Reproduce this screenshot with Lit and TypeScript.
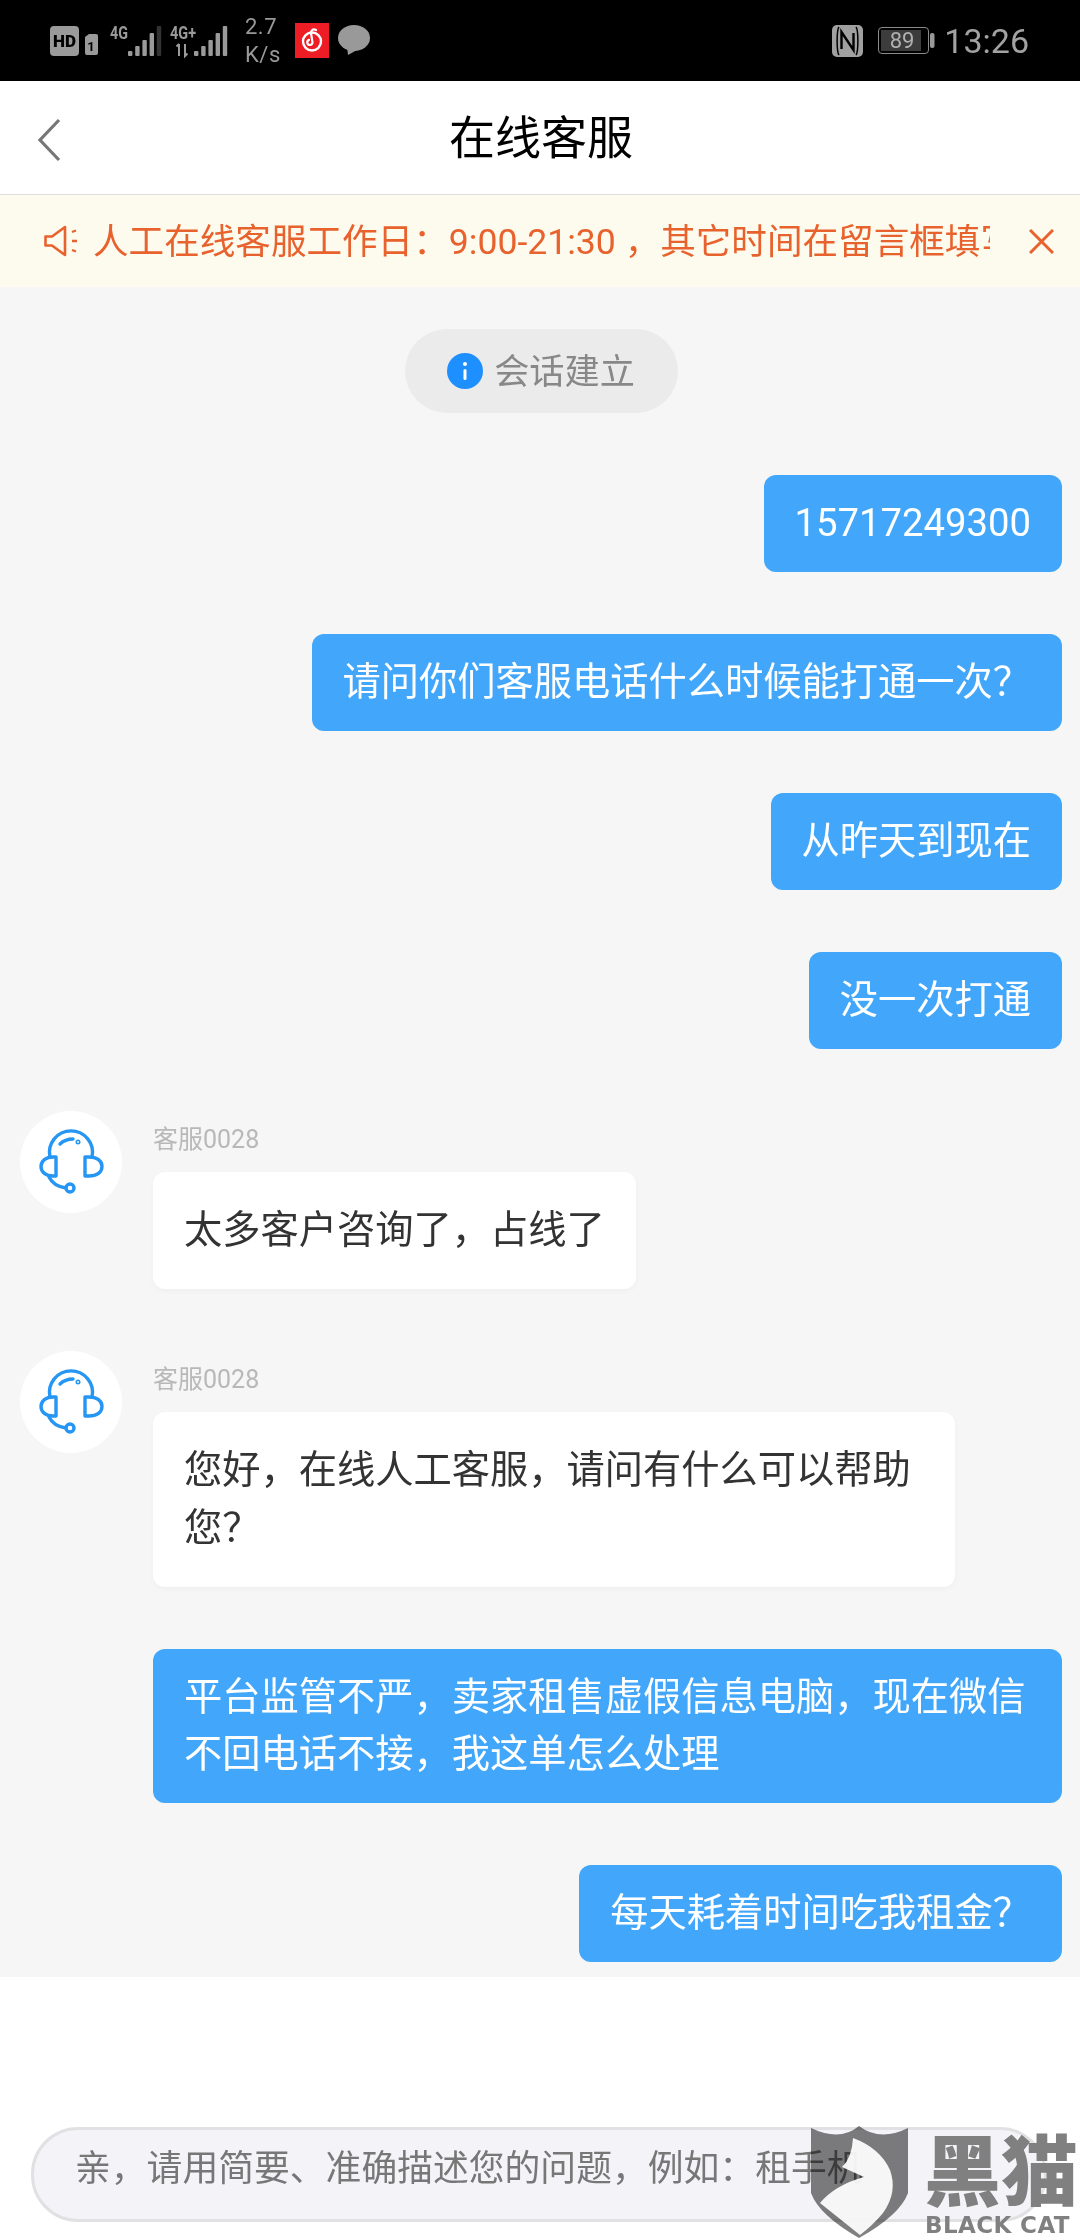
import { LitElement, html, css, svg } from "lit";
import { customElement } from "lit/decorators.js";

const headset = html`<svg class="hs" viewBox="0 0 102 102" fill="none" stroke="#2596f3" stroke-width="3.4" stroke-linecap="round" stroke-linejoin="round">
  <path d="M30 46A21.500 21.500 0 1 1 72 46"/>
  <path d="M40 33C43 30 48 28 53 28" /><circle cx="58" cy="31" r=".8"/>
  <path d="M36 46V65H33C26 65 21 61 21 55.500C21 50 26 46 33 46Z"/>
  <path d="M65 46V65H69C77 65 82 61 82 55.500C82 50 77 46 69 46Z"/>
  <path d="M29 66C32 72 38 76 46 77"/><circle cx="50" cy="77" r="4"/>
</svg>`;

const bars = (x: number, dimLast: boolean) => [0, 1, 2, 3, 4].map((i) => {
  const h = [5, 10, 16, 23, 30][i];
  return svg`<rect x=${x + i * 7.2} y=${31 - h} width="4.400" height=${h} rx="1" fill=${dimLast && i === 4 ? "#333" : "#9a9a9a"}/>`;
});

// Full-width punctuation, as in the reference
const C = "\uFF0C";
const K = "\uFF1A";
const Q = "\uFF1F";

@customElement("app-root")
export class AppRoot extends LitElement {
  static styles = css`
    :host { display: flex; flex-direction: column; position: relative; width: 1080px; height: 2240px; overflow: hidden; background: #fff;
      font-family: Roboto, "Noto Sans CJK SC", sans-serif; color: #333; }
    .status { flex: none; height: 81px; background: #000; display: flex; align-items: center; color: #a0a0a0; padding: 0 51px 0 50px; box-sizing: border-box; }
    .status svg { display: block; flex: none; overflow: visible; }
    .speed { font-size: 22px; line-height: 28px; text-align: center; margin: 0 18px 0 20px; color: #999; width: 32px; letter-spacing: .5px; }
    .spacer { flex: 1; }
    .time { font-size: 34px; color: #a2a2a2; margin-left: 9px; }
    .head { flex: none; height: 114px; box-sizing: border-box; border-bottom: 1px solid #dedede; display: flex; align-items: center; justify-content: center; position: relative; background: #fff; }
    .title { font-size: 46px; color: #000; padding: 0 0 7px 2px; }
    .back { position: absolute; left: 37px; top: 37px; }
    .notice { flex: none; height: 92px; background: #fdfaee; display: flex; align-items: center; padding-left: 44px; color: #e8622e; }
    .notice .txt { width: 897px; margin-left: 15px; padding-bottom: 5px; font-size: 35.600px; white-space: nowrap; overflow: hidden; }
    .notice .x { margin-left: 39px; }
    .chat { flex: none; background: #f6f6f6; padding: 42px 18px 15px 20px; display: flex; flex-direction: column; gap: 62px; }
    .pill { align-self: center; height: 84px; width: 273px; border-radius: 42px; background: #ebebeb; color: #888; font-size: 35.200px; display: flex; align-items: center; justify-content: center; gap: 11px; }
    .pill span { padding-bottom: 5px; }
    .mine { align-self: flex-end; background: #42a7fb; color: #fff; }
    .bubble { box-sizing: border-box; font-size: 38.250px; line-height: 57.100px; padding: 20px 31px; border-radius: 12px; }
    .wide { max-width: 909px; }
    .row { display: flex; gap: 31px; align-items: flex-start; }
    .avatar { width: 102px; height: 102px; border-radius: 50%; background: #fff; flex: none; }
    .hs { width: 102px; height: 102px; display: block; }
    .col { display: flex; flex-direction: column; align-items: flex-start; }
    .name { font-size: 25px; line-height: 36px; color: #b8b8b8; margin: 11px 0 14px; }
    .theirs { background: #fff; color: #333; padding: 30px 31px; box-shadow: 0 2px 6px rgba(0,0,0,.03); max-width: 802px; }
    .gap { flex: 1; }
    .input { flex: none; box-sizing: border-box; height: 95px; margin: 0 33px 18px 31px; border: 3px solid #e1e1e3; border-radius: 47px; background: #f4f4f8; color: #777; font-size: 35.800px; display: flex; align-items: center; padding-left: 41px; padding-bottom: 20px; white-space: nowrap; }
    .mark { position: absolute; left: 740px; top: 2080px; width: 340px; height: 160px; }
    .mark svg { position: absolute; left: 0; top: 0; }
    .mark .shield { mix-blend-mode: multiply; }
    .hei { position: absolute; left: 184px; top: 49px; font-size: 77px; line-height: 90px; font-weight: 900; color: #808080; white-space: nowrap; }
    .bc { position: absolute; left: 185px; top: 130px; font-family: "DejaVu Sans", sans-serif; font-size: 23px; line-height: 30px; font-weight: 700; color: #808080; white-space: nowrap; letter-spacing: 0.400px; }
  `;

  render() {
    return html`
      <div class="status">
        <svg width="48" height="30" viewBox="0 0 48 30">
          <rect x="0" y="0" width="29" height="30" rx="4" fill="#9a9a9a"/>
          <text x="14.500" y="21" font-size="17" font-weight="900" text-anchor="middle" fill="#000" font-family="Roboto">HD</text>
          <path d="M35 11l4-3h7a2 2 0 0 1 2 2v17a2 2 0 0 1-2 2h-9a2 2 0 0 1-2-2V13z" fill="#9a9a9a"/>
          <text x="41" y="25" font-size="13" font-weight="700" text-anchor="middle" fill="#000" font-family="Roboto">1</text>
        </svg>
        <svg style="margin-left:12px" width="50" height="32" viewBox="0 0 50 32">
          <text x="0" y="14" font-size="18" font-weight="700" fill="#9a9a9a" font-family="Roboto" textLength="18" lengthAdjust="spacingAndGlyphs">4G</text>
          ${bars(18, true)}
        </svg>
        <svg style="margin-left:10px" width="55" height="32" viewBox="0 0 55 32">
          <text x="0" y="14" font-size="18" font-weight="700" fill="#9a9a9a" font-family="Roboto" textLength="26" lengthAdjust="spacingAndGlyphs">4G+</text>
          <path d="M9 19v12M6.500 21.500L9 19M15 19v12l2.500-2.500" stroke="#9a9a9a" stroke-width="2" fill="none"/>
          ${bars(24, false)}
        </svg>
        <div class="speed">2.7<br />K/s</div>
        <svg width="34" height="35" viewBox="0 0 34 35">
          <rect width="34" height="35" fill="#ee1c25"/>
          <circle cx="17" cy="18.500" r="9" fill="none" stroke="#fff" stroke-width="2.400"/>
          <path d="M21 7c-3-1.500-5 0-5 3l1.500 9.500a2.600 2.600 0 1 1-3.500-2.600" fill="none" stroke="#fff" stroke-width="2.200" stroke-linecap="round"/>
        </svg>
        <svg style="margin-left:9px" width="32" height="31" viewBox="0 0 32 31">
          <ellipse cx="16" cy="13" rx="16" ry="13" fill="#999"/>
          <path d="M9 22l1 8 9-5z" fill="#999"/>
        </svg>
        <div class="spacer"></div>
        <svg width="31" height="32" viewBox="0 0 31 32">
          <rect width="31" height="32" rx="5" fill="#a0a0a0"/>
          <path d="M7 2C4.500 5 4.500 27 7 30M24 2c2.500 3 2.500 25 0 28" stroke="#000" stroke-width="1.500" fill="none"/>
          <path d="M9.500 24V7l12 18V8" stroke="#000" stroke-width="2.400" fill="none"/>
        </svg>
        <svg style="margin-left:15px" width="57" height="28" viewBox="0 0 57 28">
          <rect x=".5" y=".5" width="50" height="26" rx="3.500" fill="none" stroke="#8a8a8a"/>
          <rect x="3" y="3" width="40" height="21" fill="#3c3c3c"/>
          <text x="24" y="21" font-size="22" text-anchor="middle" fill="#b0b0b0" font-family="Roboto">89</text>
          <rect x="52" y="6" width="4.500" height="15" rx="2" fill="#999"/>
        </svg>
        <span class="time">13:26</span>
      </div>

      <div class="head">
        <svg class="back" width="24" height="44" viewBox="0 0 24 44" fill="none" stroke="#777" stroke-width="3.200"><path d="M22 2L3 22L22 42"/></svg>
        <span class="title">在线客服</span>
      </div>

      <div class="notice">
        <svg width="34" height="32" viewBox="0 0 34 32" fill="none" stroke="#e8622e" stroke-width="2.600" stroke-linejoin="round"><path d="M1.500 11.500h6.500L21 2v28L8 20.500H1.500z"/><path d="M28 7l4-1.500M28 16h5M28 25l4 1.500" stroke-width="2.400"/></svg>
        <div class="txt">人工在线客服工作日${K}9:00-21:30 ${C}其它时间在留言框填写留言</div>
        <svg class="x" width="25" height="25" viewBox="0 0 25 25" stroke="#e8622e" stroke-width="3" fill="none"><path d="M1 1l23 23M24 1L1 24"/></svg>
      </div>

      <div class="chat">
        <div class="pill">
          <svg width="36" height="36" viewBox="0 0 36 36"><circle cx="18" cy="18" r="18" fill="#1e8fff"/><rect x="16.500" y="16" width="3" height="11" rx="1.500" fill="#fff"/><circle cx="18" cy="11" r="2" fill="#fff"/></svg>
          <span>会话建立</span>
        </div>
        <div class="bubble mine">15717249300</div>
        <div class="bubble mine">请问你们客服电话什么时候能打通一次${Q}</div>
        <div class="bubble mine">从昨天到现在</div>
        <div class="bubble mine">没一次打通</div>
        <div class="row">
          <div class="avatar">${headset}</div>
          <div class="col"><div class="name">客服0028</div><div class="bubble theirs">太多客户咨询了${C}占线了</div></div>
        </div>
        <div class="row">
          <div class="avatar">${headset}</div>
          <div class="col"><div class="name">客服0028</div><div class="bubble theirs">您好${C}在线人工客服${C}请问有什么可以帮助您${Q}</div></div>
        </div>
        <div class="bubble mine wide">平台监管不严${C}卖家租售虚假信息电脑${C}现在微信不回电话不接${C}我这单怎么处理</div>
        <div class="bubble mine">每天耗着时间吃我租金${Q}</div>
      </div>

      <div class="gap"></div>
      <div class="input">亲${C}请用简要、准确描述您的问题${C}例如${K}租手机</div>

      <div class="mark">
        <svg class="shield" width="340" height="160" viewBox="0 0 340 160">
          <path d="M71 48Q100 62 119 46Q140 62 168 48V113Q160 135 119 158Q79 135 71 113Z" fill="#808080"/>
        </svg>
        <svg width="340" height="160" viewBox="0 0 340 160">
          <path d="M113 58Q140 68 150 90Q158 112 143 133Q132 146 120 155L80 123Q95 105 124 97L102 87Q112 78 113 58Z" fill="#fff" fill-opacity=".93"/>
        </svg>
        <div class="hei">黑猫</div>
        <div class="bc">BLACK CAT</div>
      </div>
    `;
  }
}
